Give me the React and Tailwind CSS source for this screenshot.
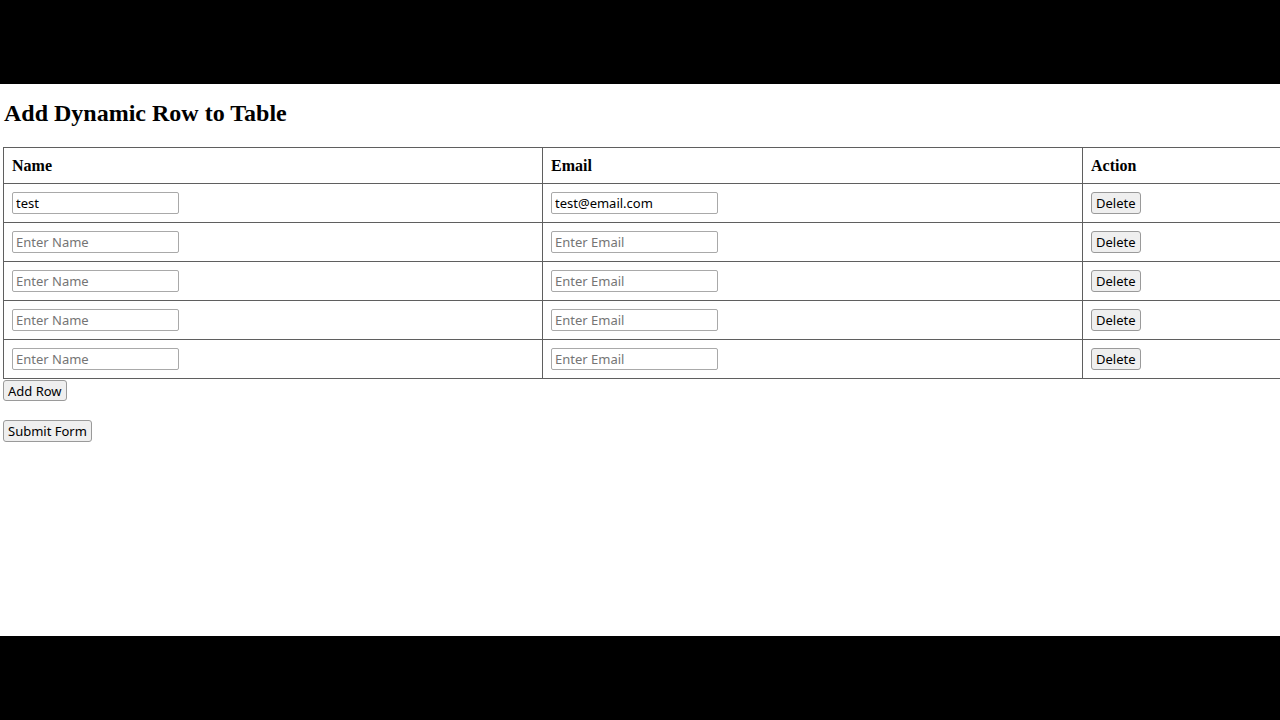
import React, { useState } from 'react';

const sans = { fontFamily: '"Noto Sans", "DejaVu Sans", sans-serif' };

const App = () => {
  const [rows] = useState([
    { name: 'test', email: 'test@email.com' },
    { name: '', email: '' },
    { name: '', email: '' },
    { name: '', email: '' },
    { name: '', email: '' },
  ]);

  return (
    <div className="w-[1280px] h-[720px] bg-black flex flex-col overflow-hidden">
      <div className="h-[84px] shrink-0" />
      <div className="h-[552px] bg-white overflow-hidden px-[3px] font-['Liberation_Serif',serif] text-black">
        <h2 className="mt-[15px] mb-[20px] pl-px text-[24px] leading-[28px] font-bold">Add Dynamic Row to Table</h2>

        <table className="w-[1619px] table-fixed border-collapse border border-[#5f5f5f]">
          <thead>
            <tr>
              <th className="w-[539px] border border-[#5f5f5f] px-2 py-2 text-left text-[16px] leading-[19px] font-bold">Name</th>
              <th className="w-[540px] border border-[#5f5f5f] px-2 py-2 text-left text-[16px] leading-[19px] font-bold">Email</th>
              <th className="w-[540px] border border-[#5f5f5f] px-2 py-2 text-left text-[16px] leading-[19px] font-bold">Action</th>
            </tr>
          </thead>
          <tbody>
            {rows.map((row, i) => (
              <tr key={i}>
                <td className="border border-[#5f5f5f] px-2 py-2 leading-none">
                  <input
                    type="text"
                    defaultValue={row.name}
                    placeholder="Enter Name"
                    style={sans}
                    className="block w-[167px] h-[22px] border border-[#a9a9a9] rounded-[2px] px-[3px] text-[13px] text-black placeholder:text-[#757575] bg-white"
                  />
                </td>
                <td className="border border-[#5f5f5f] px-2 py-2 leading-none">
                  <input
                    type="email"
                    defaultValue={row.email}
                    placeholder="Enter Email"
                    style={sans}
                    className="block w-[167px] h-[22px] border border-[#a9a9a9] rounded-[2px] px-[3px] text-[13px] text-black placeholder:text-[#757575] bg-white"
                  />
                </td>
                <td className="border border-[#5f5f5f] px-2 py-2 leading-none">
                  <button
                    style={sans}
                    className="block h-[22px] px-[4px] border border-[#9a9a9a] rounded-[3px] bg-[#efefef] text-[13px] leading-[18px] text-black"
                  >
                    Delete
                  </button>
                </td>
              </tr>
            ))}
          </tbody>
        </table>

        <button
          style={sans}
          className="block mt-px h-[21px] px-[4px] border border-[#9a9a9a] rounded-[3px] bg-[#efefef] text-[13px] leading-[18px] text-black"
        >
          Add Row
        </button>
        <button
          style={sans}
          className="block mt-[19px] h-[22px] px-[4px] border border-[#9a9a9a] rounded-[3px] bg-[#efefef] text-[13px] leading-[18px] text-black"
        >
          Submit Form
        </button>
      </div>
      <div className="flex-1" />
    </div>
  );
};

export default App;
